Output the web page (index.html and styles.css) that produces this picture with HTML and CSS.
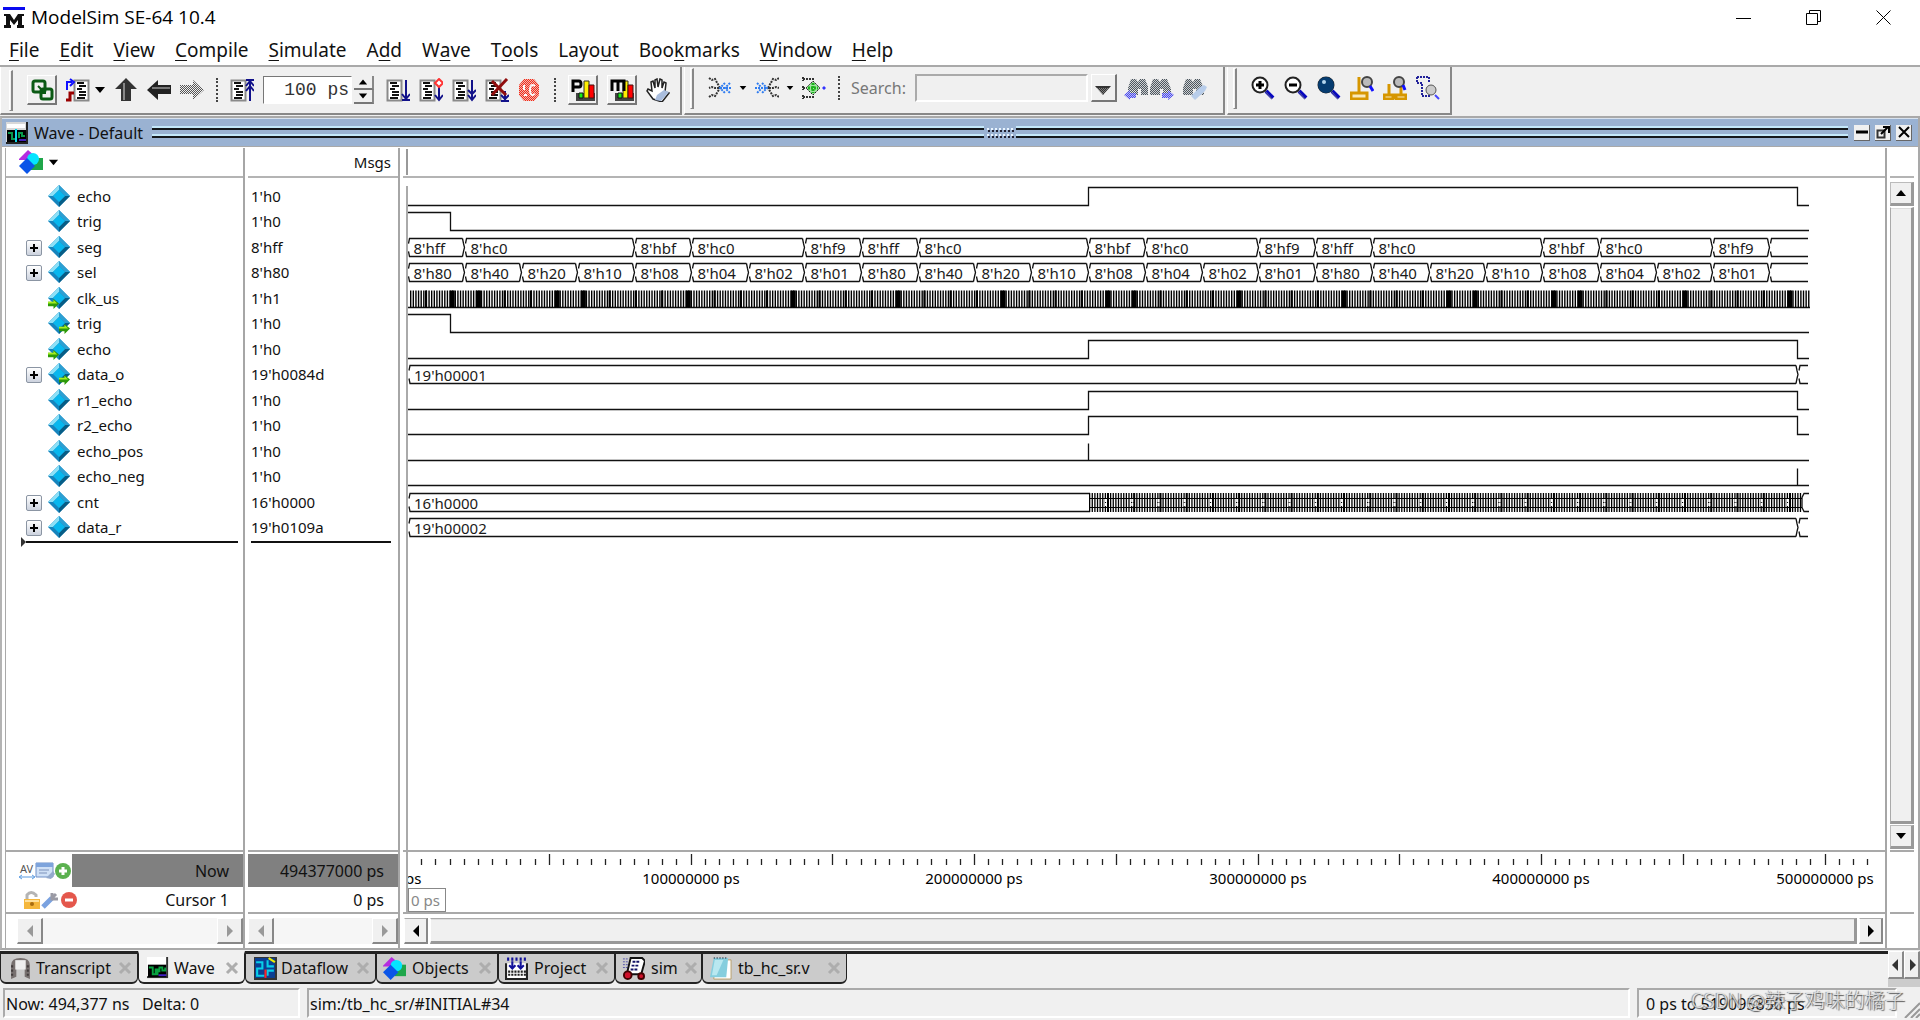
FILE: index.html
```html
<!DOCTYPE html>
<html lang="en">
<head>
<meta charset="utf-8">
<title>ModelSim SE-64 10.4</title>
<link rel="stylesheet" href="styles.css">
</head>
<body>
<svg class="sprite" aria-hidden="true">
  <defs>
    <pattern id="dots" width="2" height="2" patternUnits="userSpaceOnUse"><path d="M0 0h1v1H0zM1 1h1v1H1z" fill="#f0f0f0"/></pattern>
  </defs>
  <symbol id="doc" viewBox="0 0 24 24"><path d="M1.500 2.500h14v20h-14z" fill="#fff" stroke="#8a8a8a" stroke-width="2"/><path d="M4 5h7M6 8h7M4 11h5M6 14h7M6 17h7M4 20h8" stroke="#111" stroke-width="2"/></symbol>
  <symbol id="diamond" viewBox="0 0 22 22"><path d="M11 0 22 11 11 22 0 11z" fill="#1684bd"/><path d="M11 0 0 11h5l6-6z" fill="#8be0f7"/><path d="M11 0 22 11h-5l-6-6z" fill="#2d9fd2"/><path d="M11 22 22 11h-5l-6 6z" fill="#075d86"/><path d="m11 5 6 6-6 6-6-6z" fill="#08b7ee"/></symbol>
  <symbol id="port" viewBox="0 0 12 12"><path d="M0 4h6V1l6 5-6 6V9H0z" fill="#2c9a08"/><path d="M0 4h6V2l4 4H0z" fill="#a5ee20"/></symbol>
  <symbol id="shapes" viewBox="0 0 24 24"><path d="M0 9 9 0l8 7v3H0z" fill="#b52ce0"/><path d="M12 8h12v12H12z" fill="#1fa64a"/><circle cx="14" cy="9" r="6" fill="#05e4ff"/><path d="m8 8 8 8-8 8-8-8z" fill="#0b55e8"/></symbol>
  <symbol id="waveicon" viewBox="0 0 22 22"><path d="M0 0h22v22H0z" fill="#222"/><path d="M0 0h20v20H0z" fill="#d8d8d8"/><path d="M1 2h18v4H1z" fill="#fff"/><path d="M1 8h19v12H1z" fill="#000"/><path d="M2 11h4v6h4v-6M13 16v-5h3v3h3" fill="none" stroke="#089a4c" stroke-width="2"/><path d="M10 7v13" stroke="#0fd7e8" stroke-width="2"/><path d="M13 18h7" stroke="#4420b8" stroke-width="2"/></symbol>
  <symbol id="wave2" viewBox="0 0 24 24"><path d="M0 0h22v22H0z" fill="#333"/><path d="M0 0h20v20H0z" fill="#fff"/><path d="M1 8h19v13H1z" fill="#000"/><path d="M2 11h4v7h3v-5h2v6M13 16v-5h3v3h3v-3" fill="none" stroke="#07a340" stroke-width="2"/><path d="M12 19h8" stroke="#4020c0" stroke-width="2"/></symbol>
  <symbol id="bars" viewBox="0 0 24 24"><path d="M5 15h19v8H5z" fill="#444"/><path d="M8 15h4v5H8z" fill="#18f018" stroke="#111"/><path d="M13 3h5v17h-5z" fill="#ffee00" stroke="#332"/><path d="M18 7h5v13h-5z" fill="#f00" stroke="#411"/></symbol>
  <symbol id="lens" viewBox="0 0 24 24"><path d="m15 15 7 7" stroke="#0808c0" stroke-width="4"/><path d="m14 15 7 8" stroke="#668" stroke-width="1"/><circle cx="9" cy="9" r="7.500" fill="#fff" stroke="#222" stroke-width="2"/></symbol>
  <symbol id="binoc" viewBox="0 0 24 24"><path d="M5 3h5l2 3 2-3h5l4 10v6h-8v-6h-3v6H2v-7z" fill="#4c565e"/><path d="M0 0h24v24H0z" fill="url(#dots)" opacity=".8"/></symbol>
  <symbol id="cross" viewBox="0 0 14 14"><path d="m2 2 10 10M12 2 2 12" stroke="#adadad" stroke-width="3"/></symbol>
  <symbol id="tl" viewBox="0 0 12 12"><path d="M9 0v12L3 6z"/></symbol>
  <symbol id="tr" viewBox="0 0 12 12"><path d="M3 0v12l6-6z"/></symbol>
  <symbol id="tu" viewBox="0 0 12 12"><path d="M1 9h10L6 3z"/></symbol>
  <symbol id="td" viewBox="0 0 12 12"><path d="M1 3h10L6 9z"/></symbol>
</svg>

<header class="titlebar">
  <svg class="logo" viewBox="0 0 22 22"><path d="M0 0h22v3H0z" fill="#0a0af0"/><path d="M1 21v-3h2V9H1V7h6l4 6 4-6h6v2h-2v9h2v3h-7v-3h1v-5l-4 5-4-5v5h1v3z" fill="#111"/></svg>
  <h1>ModelSim SE-64 10.4</h1>
  <div class="wincontrols">
    <button aria-label="Minimize"><svg viewBox="0 0 16 16"><path d="M0 8.500h15"/></svg></button>
    <button aria-label="Restore"><svg viewBox="0 0 16 16"><path d="M.5 3.500h11v11H.5zM3.500 3.500v-3h11v11h-3"/></svg></button>
    <button aria-label="Close"><svg viewBox="0 0 16 16"><path d="m.5.5 14 14m0-14-14 14"/></svg></button>
  </div>
</header>

<nav class="menubar">
  <button><u>F</u>ile</button><button><u>E</u>dit</button><button><u>V</u>iew</button><button><u>C</u>ompile</button><button><u>S</u>imulate</button><button>A<u>d</u>d</button><button>W<u>a</u>ve</button><button>T<u>o</u>ols</button><button>Layo<u>u</u>t</button><button>Boo<u>k</u>marks</button><button><u>W</u>indow</button><button><u>H</u>elp</button>
</nav>

<div class="toolbars">
  <div class="group">
    <i class="handle"></i>
    <button class="raised" aria-label="Link"><svg viewBox="0 0 24 24"><g fill="none" stroke="#0b5a14" stroke-width="3"><rect x="3" y="3" width="12" height="11" rx="2"/><rect x="11" y="11" width="11" height="10" rx="2"/></g><path d="m8 8 7 7m0-5v5h-5" fill="none" stroke="#0b5a14" stroke-width="2"/></svg></button>
    <button aria-label="Step"><svg viewBox="0 0 24 24"><use href="#doc" x="7" y="0" width="24" height="24"/><path d="M1 12V4h5M4 1l4 3-4 4" fill="none" stroke="#1010ff" stroke-width="2"/><path d="M0 22h4v-7h4" fill="none" stroke="#900" stroke-width="3"/></svg></button>
    <button class="caret" aria-label="Step options"><svg viewBox="0 0 12 12"><use href="#td"/></svg></button>
    <button aria-label="Up"><svg viewBox="0 0 24 24"><path d="m12 0 11 11h-6v12H7V11H1z" fill="#333"/><path d="M10 5v17" stroke="#888" stroke-width="2"/></svg></button>
    <button aria-label="Back"><svg viewBox="0 0 24 24"><path d="M0 12 11 2v5h13v9H11v6z" fill="#222"/><path d="M5 10h18" stroke="#777" stroke-width="2"/></svg></button>
    <button aria-label="Forward"><svg viewBox="0 0 24 24"><path d="M24 12 13 2v5H0v9h13v6z" fill="#555"/><path d="M0 0h24v24H0z" fill="url(#dots)"/></svg></button>
    <i class="sep"></i>
    <button aria-label="Restart"><svg viewBox="0 0 24 24"><use href="#doc"/><path d="M16 2h8M20 3v20M16 8l4-5 4 5M16 13l4-5 4 5" fill="none" stroke="#11118a" stroke-width="2"/></svg></button>
    <div class="spinbox"><input type="text" value="100 ps" aria-label="Run length"><div class="spin"><button aria-label="Increase"><svg viewBox="0 0 12 12"><use href="#tu"/></svg></button><button aria-label="Decrease"><svg viewBox="0 0 12 12"><use href="#td"/></svg></button></div></div>
    <button aria-label="Run"><svg viewBox="0 0 24 24"><use href="#doc"/><path d="M20 2v19M16 16l4 5 4-5M16 22h8" fill="none" stroke="#11118a" stroke-width="2"/></svg></button>
    <button aria-label="Continue run"><svg viewBox="0 0 24 24"><use href="#doc"/><path d="M20 9v13M16 17l4 5 4-5" fill="none" stroke="#11118a" stroke-width="2"/><path d="m20 1 4 4-4 4-4-4z" fill="#fff" stroke="#f33" stroke-width="2"/></svg></button>
    <button aria-label="Run all"><svg viewBox="0 0 24 24"><use href="#doc"/><path d="M20 2v20M16 12l4 4 4-4M16 17l4 5 4-5" fill="none" stroke="#11118a" stroke-width="2"/></svg></button>
    <button aria-label="Break"><svg viewBox="0 0 24 24"><use href="#doc"/><path d="M20 13v9M16 17l4 4 4-4M16 23h8" fill="none" stroke="#11118a" stroke-width="2"/><path d="m7 3 14 14M22 1 7 17" stroke="#900d0d" stroke-width="3"/></svg></button>
    <button aria-label="Stop"><svg viewBox="0 0 24 24"><path d="M6 1h10l5 6v10l-5 6H6l-5-6V7z" fill="#f32b18"/><path d="M17 8q-5-3-5 4t5 4M6 7v5M6 17h3" stroke="#fff" stroke-width="2" fill="none"/><path d="M0 0h24v24H0z" fill="url(#dots)" opacity=".7"/></svg></button>
    <i class="sep"></i>
    <button class="raised" aria-label="Performance profile"><svg viewBox="0 0 24 24"><use href="#bars"/><path d="M2 14V3h6q2 0 2 3t-2 3H3" fill="none" stroke="#000" stroke-width="3"/></svg></button>
    <button class="raised" aria-label="Memory profile"><svg viewBox="0 0 24 24"><use href="#bars"/><path d="M2 13V3h12v10M8 3v10" fill="none" stroke="#000" stroke-width="3"/></svg></button>
    <button aria-label="Pan"><svg viewBox="0 0 24 24"><path d="M7 21 1 13l1-2 4 2-1-9 2-1 2 7V2l2-1 1 8 2-8 2 1v8l2-6 2 1-1 9 4 1-7 9z" fill="#fff" stroke="#222" stroke-width="1.500"/><path d="m11 17 7-5 5 2-8 9-6-1z" fill="#a9bddd"/></svg></button>
  </div>
  <div class="group drivers">
    <i class="handle"></i>
    <button aria-label="Drivers"><svg viewBox="0 0 24 24"><path d="M1 2l3 2 3-1 5 9-5 0-3-1-3 1M1 21l3-2 3 1 5-8" fill="none" stroke="#333" stroke-width="2" stroke-dasharray="2 1"/><path d="m17 7-5 5 5 5M22 7l-5 5 5 5M12 12h12" fill="none" stroke="#2f7cf0" stroke-width="2" stroke-dasharray="2 1"/></svg></button>
    <button class="caret small" aria-label="Drivers options"><svg viewBox="0 0 12 12"><use href="#td"/></svg></button>
    <button aria-label="Readers"><svg viewBox="0 0 24 24"><path d="M24 2l-3 2-3-1-5 9 5 0 3-1 3 1M24 21l-3-2-3 1-5-8" fill="none" stroke="#333" stroke-width="2" stroke-dasharray="2 1"/><path d="m7 7 5 5-5 5M2 7l5 5-5 5M0 12h12" fill="none" stroke="#2f7cf0" stroke-width="2" stroke-dasharray="2 1"/></svg></button>
    <button class="caret small" aria-label="Readers options"><svg viewBox="0 0 12 12"><use href="#td"/></svg></button>
    <button aria-label="Net"><svg viewBox="0 0 24 24"><path d="M1 1v4M1 3h11M1 10v4M1 12h6M1 19v4M1 21h11" stroke="#333" stroke-width="2" stroke-dasharray="2 1"/><path d="m11 5 7 7-7 7-7-7z" fill="#9fe39f" stroke="#222" stroke-dasharray="2 1"/><path d="M11 7v10M6 12h10" stroke="#1db31d" stroke-width="3" stroke-dasharray="2 1"/><path d="m22 10 2 2-2 2-2-2z" fill="#33f"/></svg></button>
    <i class="sep"></i>
    <label for="search">Search:</label>
    <div class="combo"><input id="search" type="text"><button class="raised" aria-label="Search history"><svg viewBox="0 0 24 24"><path d="M4 10h16l-8 9z" fill="#333"/><path d="M4 12h15v6H4z" fill="url(#dots)" opacity=".4"/></svg></button></div>
    <button class="tight" aria-label="Find previous"><svg viewBox="0 0 24 24"><use href="#binoc" x="2"/><path d="m0 19 6-5v3h6v5H6v2z" fill="#4a4af0"/><path d="M0 14h12v10H0z" fill="url(#dots)" opacity=".7"/></svg></button>
    <button class="tight" aria-label="Find next"><svg viewBox="0 0 24 24"><use href="#binoc" x="-2"/><path d="m24 19-6-5v3h-6v5h6v2z" fill="#4a4af0"/><path d="M12 14h12v10H12z" fill="url(#dots)" opacity=".7"/></svg></button>
    <button aria-label="Search options"><svg viewBox="0 0 24 24"><use href="#binoc" x="-2"/><path d="m8 20 9-9 4-2 3 2-2 4-10 9z" fill="#b8cdea"/></svg></button>
  </div>
  <div class="group">
    <i class="handle"></i>
    <button aria-label="Zoom in"><svg viewBox="0 0 24 24"><use href="#lens"/><path d="M5 9h8M9 5v8" stroke="#000" stroke-width="3"/></svg></button>
    <button aria-label="Zoom out"><svg viewBox="0 0 24 24"><use href="#lens"/><path d="M5 9h8" stroke="#000" stroke-width="3"/></svg></button>
    <button aria-label="Zoom full"><svg viewBox="0 0 24 24"><use href="#lens"/><circle cx="9" cy="9" r="8" fill="#063c70"/><circle cx="7" cy="6" r="2" fill="#b5d5ec"/></svg></button>
    <button aria-label="Zoom to cursor"><svg viewBox="0 0 24 24"><path d="M9 1v15M1 17h16v6H1z" fill="#f8e9bb" stroke="#d69600" stroke-width="3"/><circle cx="17" cy="6" r="5" fill="#bbb" stroke="#444" stroke-width="2"/><path d="m20 10 3 5" stroke="#11f" stroke-width="3"/></svg></button>
    <button aria-label="Zoom between cursors"><svg viewBox="0 0 24 24"><path d="M6 8v10M1 19h9v4H1zM18 4v14M13 19h10v4H13z" fill="#f8e9bb" stroke="#d69600" stroke-width="3"/><circle cx="16" cy="6" r="5" fill="#bbb" stroke="#444" stroke-width="2"/><path d="m20 9 2 5" stroke="#11f" stroke-width="3"/></svg></button>
    <button aria-label="Zoom area"><svg viewBox="0 0 24 24"><path d="M1 1h12v5M1 1v6h5v13h8" fill="none" stroke="#22229a" stroke-width="2" stroke-dasharray="2 1"/><circle cx="15" cy="14" r="5" fill="#ccc" stroke="#555"/><path d="m19 19 4 4" stroke="#44f" stroke-width="2"/></svg></button>
  </div>
</div>

<main class="pane">
  <div class="panetitle">
    <svg class="ico"><use href="#waveicon"/></svg>
    <h2>Wave - Default</h2>
    <i class="rails"></i>
    <svg class="grip" viewBox="0 0 28 12" aria-hidden="true"><path d="M1 2h26M1 8h26" stroke="#e8f4ff" stroke-width="2" stroke-dasharray="2 2"/><path d="M2 4h26M2 10h26" stroke="#223" stroke-width="2" stroke-dasharray="2 2"/></svg>
    <i class="rails"></i>
    <button aria-label="Minimize pane"><svg viewBox="0 0 14 14"><path d="M1 7h12" stroke="#000" stroke-width="3"/></svg></button>
    <button aria-label="Undock pane"><svg viewBox="0 0 14 14"><path d="M1.500 5.500h7v7h-7z" fill="none" stroke="#333" stroke-width="2"/><path d="M5 9l7-7M7 2h6v6" stroke="#000" stroke-width="2" fill="none"/></svg></button>
    <button aria-label="Close pane"><svg viewBox="0 0 14 14"><path d="m2 2 10 10M12 2 2 12" stroke="#000" stroke-width="2"/></svg></button>
  </div>
  <div class="columns">
    <section class="col names">
      <div class="head"><svg class="shapes"><use href="#shapes"/></svg><svg class="tri"><use href="#td"/></svg></div>
      <div class="body"><ul class="rows" id="names"></ul></div>
      <div class="foot">
        <div class="now">
          <svg class="footicons" viewBox="0 0 54 18"><text x="1" y="11" font-size="11" fill="#555">AV</text><path d="M1 15h14M3 13l-3 2 3 2M13 13l3 2-3 2" stroke="#5b9be0" fill="none"/><path d="M17 1h17v14H17z" fill="#cfe0f6" stroke="#6f90c8"/><path d="M17 1h17v4H17z" fill="#7ea4dc"/><path d="M20 8h10M20 11h8" stroke="#7d92bb"/><path d="m27 16 7-7 2 3-4 5z" fill="#93a9cc"/><circle cx="44" cy="9" r="8" fill="#5bb14f"/><path d="M44 5v8M40 9h8" stroke="#fff" stroke-width="3"/></svg>
          <span>Now</span></div>
        <div class="cursor">
          <svg class="footicons" viewBox="0 0 54 18"><path d="M4 8V4q4-5 9 0v2" fill="none" stroke="#b4b4b4" stroke-width="3"/><path d="M1 8h16v10H1z" fill="#f5b73c"/><path d="M2 9h14v2H2z" fill="#ffe09a"/><circle cx="9" cy="13" r="2" fill="#a86c10"/><path d="m20 16 9-9" stroke="#7aa2e0" stroke-width="5"/><path d="m28 8 5-5M29 2v6h6" stroke="#9a9aa4" stroke-width="3" fill="none"/><circle cx="46" cy="9" r="8" fill="#e4574c"/><path d="M42 9h8" stroke="#fff" stroke-width="3"/></svg>
          <span>Cursor 1</span></div>
      </div>
      <div class="scroll disabled"><button aria-label="Scroll left"><svg><use href="#tl"/></svg></button><i class="trough"></i><button aria-label="Scroll right"><svg><use href="#tr"/></svg></button></div>
    </section>
    <section class="col values">
      <div class="head"><span>Msgs</span></div>
      <div class="body"><ul class="rows" id="values"></ul></div>
      <div class="foot"><div class="now"><span>494377000 ps</span></div><div class="cursor"><span>0 ps</span></div></div>
      <div class="scroll disabled"><button aria-label="Scroll left"><svg><use href="#tl"/></svg></button><i class="trough"></i><button aria-label="Scroll right"><svg><use href="#tr"/></svg></button></div>
    </section>
    <section class="col waves">
      <div class="head"><i class="edge"></i></div>
      <div class="body"><svg id="plot"></svg></div>
      <div class="foot"><svg id="ruler"></svg><output class="cursorbox">0 ps</output></div>
      <div class="scroll"><button aria-label="Scroll left"><svg><use href="#tl"/></svg></button><i class="thumb"></i><button aria-label="Scroll right"><svg><use href="#tr"/></svg></button></div>
    </section>
    <section class="col vscroll">
      <div class="head"></div>
      <div class="body"><button aria-label="Scroll up"><svg><use href="#tu"/></svg></button><i class="thumb"></i><button aria-label="Scroll down"><svg><use href="#td"/></svg></button></div>
      <div class="foot"></div>
      <div class="scroll"></div>
    </section>
  </div>
</main>

<nav class="tabs">
  <button class="t1"><svg class="ico" viewBox="0 0 22 22"><path d="M2 21V8q0-7 9-7t9 7v13l-5-2V9H7v10z" fill="#77706f"/><path d="M6 3h10v9H6z" fill="#eee"/><path d="M3 8v12M18 8v12" stroke="#423c3c" stroke-width="2" stroke-dasharray="2 2"/></svg><span>Transcript</span><svg class="x"><use href="#cross"/></svg></button>
  <button class="t2 active"><svg class="ico"><use href="#wave2"/></svg><span>Wave</span><svg class="x"><use href="#cross"/></svg></button>
  <button class="t3"><svg class="ico" viewBox="0 0 22 22"><path d="M0 0h22v22H0z" fill="#333"/><path d="M1 1h19v19H1z" fill="#0a3f94"/><path d="M2 5h6v6H3v7h7M13 3v6h6M13 18v-5h6" fill="none" stroke="#08cfe8" stroke-width="2"/><path d="M11 12v8" stroke="#f22" stroke-width="2"/><path d="m14 1 6 4" stroke="#ee0" stroke-width="2"/></svg><span>Dataflow</span><svg class="x"><use href="#cross"/></svg></button>
  <button class="t4"><svg class="ico"><use href="#shapes"/></svg><span>Objects</span><svg class="x"><use href="#cross"/></svg></button>
  <button class="t5"><svg class="ico" viewBox="0 0 22 22"><path d="M1 6v15h20V6" fill="#fff" stroke="#222" stroke-width="2"/><path d="M3 14h17M3 17h17" stroke="#222" stroke-dasharray="2 1" stroke-width="2"/><path d="M2 2h18" stroke="#11119a" stroke-width="3" stroke-dasharray="2 2"/><path d="M7 4v7M4 8l3 3 3-3M15 4v7M12 8l3 3 3-3" fill="none" stroke="#11119a" stroke-width="2"/></svg><span>Project</span><svg class="x"><use href="#cross"/></svg></button>
  <button class="t6"><svg class="ico" viewBox="0 0 24 24"><path d="M1 2h6M1 5h6M1 8h5M1 11h5" stroke="#55a" stroke-dasharray="2 1"/><path d="M9 1h12l3 3-4 14H5z" fill="#fff" stroke="#111" stroke-width="2"/><path d="M11 5h8M10 9h8M9 13h8" stroke="#116" stroke-width="2" stroke-dasharray="3 1"/><circle cx="6" cy="19" r="4" fill="#d0102a" stroke="#400" stroke-width="2"/><circle cx="20" cy="20" r="3" fill="#d0102a" stroke="#400" stroke-width="2"/></svg><span>sim</span><svg class="x"><use href="#cross"/></svg></button>
  <button class="t7"><svg class="ico" viewBox="0 0 24 24"><path d="M7 3h16v20H5z" fill="#fff" stroke="#b79d68"/><path d="M5 1h15l-2 20H1z" fill="#86cede"/><path d="M6 3h9L8 19H3z" fill="#b9e8f0"/><path d="M5 1h15" stroke="#456" stroke-width="2" stroke-dasharray="1 2"/></svg><span>tb_hc_sr.v</span><svg class="x"><use href="#cross"/></svg></button>
  <i class="fill"></i>
  <div class="tabnav"><button aria-label="Previous tabs"><svg viewBox="0 0 12 12"><path d="M8 0v12L2 6z" fill="#333"/></svg></button><button aria-label="Next tabs"><svg viewBox="0 0 12 12"><path d="M4 0v12l6-6z" fill="#333"/></svg></button></div>
</nav>

<footer class="status">
  <span class="cell now-cell">Now: 494,377 ns&nbsp;&nbsp; Delta: 0</span>
  <span class="cell path-cell">sim:/tb_hc_sr/#INITIAL#34</span>
  <span class="cell range-cell">0 ps to 519095850 ps</span>
  <svg class="sizer" viewBox="0 0 16 16"><path d="M1 16 16 1M7 16l9-9M12 16l4-4" stroke="#999" stroke-width="2"/></svg>
  <span class="watermark">CSDN @辣子鸡味的橘子</span>
</footer>
<script src="wave.js"></script>
</body>
</html>
```
FILE: styles.css
```css
* { box-sizing: border-box; }
body {
  margin: 0; min-height: 100vh; display: flex; flex-direction: column;
  background: #f0f0f0; color: #111; font-family: "Noto Sans", "Noto Sans CJK SC", sans-serif; font-size: 15px; line-height: 20px;
}
button { font: inherit; color: inherit; border: 0; padding: 0; background: none; display: flex; align-items: center; justify-content: center; }
input { font: inherit; border-radius: 0; }
svg { display: block; flex: none; }
ul { list-style: none; margin: 0; padding: 0; }
.sprite { position: absolute; width: 0; height: 0; }

.titlebar { height: 36px; background: #fff; display: flex; align-items: center; padding: 0 1px 0 3px; }
.logo { width: 22px; height: 22px; }
h1 { margin: 0 0 2px 6px; font: 19px/26px "Open Sans", "Noto Sans", sans-serif; color: #000; flex: 1; }
.wincontrols { display: flex; }
.wincontrols button { width: 70px; height: 32px; }
.wincontrols svg { width: 16px; height: 16px; fill: none; stroke: #000; }

.menubar { height: 29px; background: #fff; display: flex; align-items: center; gap: 20px; padding: 0 0 1px 9px; font-size: 19px; }
.menubar button { height: 26px; }
.menubar u { text-underline-offset: 3px; text-decoration-thickness: 1px; }

.toolbars { display: flex; height: 51px; border-top: 2px solid #a9a9a9; gap: 2px; padding-right: 4px; }
.group { display: flex; align-items: center; gap: 9px; height: 48px; padding: 0 10px 4px 5px; border: solid #888; border-width: 0 2px 2px 0; border-left: 1px solid #fff; }
.group:first-child { padding: 0 10px 0 8px; }
.group.drivers { padding-right: 16px; }
.handle { width: 4px; height: 41px; margin-right: 5px; border: 1px solid #fff; border-right: 2px solid #888; border-bottom-color: #888; }
.group button { width: 24px; height: 28px; }
.group svg { width: 24px; height: 24px; }
.group .raised, .raised { width: 30px; height: 30px; background: #f0f0f0; border: 1px solid #fff; border-right: 2px solid #777; border-bottom: 2px solid #777; }
.group .caret { width: 10px; margin-left: -4px; }
.group .caret svg { width: 12px; height: 12px; }
.group .caret.small { margin-left: -1px; width: 6px; }
.group .caret.small svg { width: 8px; height: 8px; }
.sep { height: 24px; border-left: 2px dotted #444; margin: 0 3px; }
.group label { font-size: 16px; color: #777; margin-left: -1px; }
.spinbox { display: flex; gap: 2px; margin-right: 3px; }
.spinbox input { width: 89px; height: 28px; border: 1px solid #fff; border-left-color: #777; border-top-color: #777; background: #fff; font: 18px "Liberation Mono", monospace; color: #333; text-align: right; padding: 0 2px; }
.spin { width: 20px; display: flex; flex-direction: column; }
.group .spin button { width: 20px; height: 14px; border-bottom: 2px solid #777; border-right: 2px solid #888; }
.group .spin svg { width: 12px; height: 10px; }
.combo { display: flex; gap: 3px; margin-right: -2px; }
.combo input { width: 173px; height: 28px; background: #f0f0f0; border: 2px solid #fff; border-top-color: #aaa; border-left-color: #aaa; }
.group .combo .raised { width: 26px; height: 28px; }
.group .tight { margin-right: -7px; }
.group .tight + button:last-child { margin-left: 7px; }

.pane { flex: 1; display: flex; flex-direction: column; border: 2px solid #a9a9a9; border-left-color: #b4b4b4; background: #fff; min-height: 0; }
.panetitle { display: flex; align-items: center; height: 28px; background: #9ab2d2; padding: 0 6px 0 4px; border-top: 1px solid #d8e2ee; }
.panetitle .ico { width: 22px; height: 22px; }
h2 { margin: 0 9px 0 6px; font-size: 16px; font-weight: 400; line-height: 20px; }
.rails { flex: 1 1 0; height: 13px; background: linear-gradient(#c4e8fa 0 2px, #15191d 2px 4px, #9ab2d2 4px 8px, #c4e8fa 8px 10px, #15191d 10px 12px, transparent 12px); }
.grip { width: 28px; height: 12px; margin: 0 2px; }
.panetitle button { width: 16px; height: 16px; background: #f0f0f0; margin-left: 5px; border-right: 1px solid #666; border-bottom: 1px solid #666; }
.panetitle .rails + button { margin-left: 6px; }
.panetitle button svg { width: 14px; height: 14px; }

.columns { flex: 1; display: flex; gap: 3px; padding: 1px 4px 0 3px; border-top: 1px solid #a9a9a9; min-height: 0; }
.col { display: flex; flex-direction: column; border-right: 2px solid #a6a6a6; }
.head { height: 30px; border-bottom: 2px solid #b4b4b4; display: flex; align-items: center; }
.body { flex: 1; min-height: 0; overflow: hidden; }
.foot { height: 64px; border: solid #a9a9a9; border-width: 2px 0; overflow: hidden; }
.scroll { height: 34px; display: flex; align-items: center; }
.names { width: 240px; border-left: 1px solid #a9a9a9; }
.names .head { padding-left: 13px; }
.shapes { width: 24px; height: 24px; }
.tri { width: 11px; height: 11px; margin-left: 5px; }
.rows { display: grid; grid-template-rows: repeat(14, 1fr); height: 360px; padding-bottom: 1px; border-bottom: 2px solid #111; }
.rows li { display: flex; align-items: center; min-height: 0; }
#names { position: relative; margin: 5px 5px 0 20px; }
#names::after { content: ""; position: absolute; left: -5px; bottom: -6px; border: 5px solid transparent; border-left: 5px solid #333; border-right: 0; }
#names .glyph { width: 22px; height: 22px; margin: 0 7px 0 6px; }
#names .expander { width: 16px; height: 16px; border: 1px solid #8b95a3; border-radius: 2px; background: linear-gradient(#fff, #ccd2de); margin-top: 2px; }
#names .expander svg { width: 10px; height: 10px; }
#names .blank { width: 16px; }
.values { width: 152px; }
.values .head { justify-content: flex-end; padding-right: 7px; }
#values { margin: 5px 7px 0 3px; }
.now { height: 33px; margin-top: 2px; background: #808080; display: flex; align-items: center; justify-content: flex-end; padding-right: 14px; }
.cursor { height: 25px; display: flex; align-items: center; justify-content: flex-end; padding-right: 14px; }
.now, .cursor { font-size: 16px; }
.names .now, .names .cursor { justify-content: space-between; }
.names .now { background: linear-gradient(90deg, #fff 66px, #808080 66px); padding-left: 13px; }
.names .cursor { padding-left: 17px; }
.footicons { width: 54px; height: 18px; }
.scroll button { width: 26px; height: 26px; background: #f0f0f0; border: 1px solid #fff; border-right: 2px solid #888; border-bottom: 2px solid #888; }
.scroll button svg, .vscroll button svg { width: 12px; height: 12px; }
.disabled button svg { fill: #999; }
.names .scroll { padding-left: 11px; }
.trough { flex: 1; height: 26px; background: #f6f6f6; }
.waves { flex: 1; min-width: 0; }
.waves .body, .waves .head { padding-left: 3px; }
.edge { border-left: 2px solid #999; height: 26px; }
.waves .body { padding-top: 8px; }
#plot { width: 100%; height: 100%; border-left: 2px solid #aaa; }
.waves .foot { position: relative; padding-left: 3px; }
#ruler { width: 100%; height: 60px; border-left: 2px solid #aaa; }
.cursorbox { position: absolute; left: 5px; bottom: 0; width: 38px; height: 24px; border: 1px solid #888; color: #888; background: #fff; padding-left: 2px; line-height: 22px; }
svg text { font-family: "Noto Sans", sans-serif; }
.waves .scroll { padding: 0 2px 0 1px; gap: 2px; }
.waves .scroll button { width: 24px; height: 26px; }
.thumb { flex: 1; background: #f0f0f0; border: 1px solid #fff; box-shadow: inset 0 1px #ddd; border-right: 3px solid #999; border-bottom: 3px solid #999; }
.waves .thumb { height: 26px; }
.waves .scroll button, .waves .thumb { border-top: 1px solid #aaa; }
.vscroll { width: 24px; border-right: 0; }
.vscroll .body { display: flex; flex-direction: column; padding: 4px 0 1px; gap: 1px; }
.vscroll .body button { height: 24px; background: #f0f0f0; border: 1px solid #bbb; border-right: 3px solid #999; border-bottom: 3px solid #999; }
.vscroll .thumb { border-left: 1px solid #aaa; }

.tabs { display: flex; height: 36px; margin-top: 1px; font-size: 16px; align-items: flex-start; }
.tabs > button { height: 33px; background: #cbcbcb; border: 1px solid #222; border-top-width: 3px; border-bottom-width: 2px; border-radius: 0 0 6px 6px; justify-content: flex-start; padding: 0 5px 0 8px; gap: 4px; }
.tabs > button.active { background: #f0f0f0; border-top-color: #f0f0f0; }
.tabs span { flex: 1; text-align: left; white-space: nowrap; }
.tabs .ico { width: 23px; height: 23px; }
.tabs .x { width: 14px; height: 14px; }
.t1 { width: 138px; } .t2 { width: 107px; } .t3 { width: 131px; } .t4 { width: 122px; } .t5 { width: 117px; } .t6 { width: 87px; } .t7 { width: 145px; }
.tabs .t4, .tabs .t5, .tabs .t6, .tabs .t7 { padding-left: 6px; gap: 6px; }
.fill { flex: 1; border-top: 3px solid #222; }
.tabnav { display: flex; background: #ccc; height: 36px; }
.tabnav button { width: 16px; height: 28px; background: #f0f0f0; border: 1px solid #fff; border-right: 2px solid #888; border-bottom: 2px solid #888; }
.tabnav svg { width: 12px; height: 12px; }

.status { display: flex; height: 33px; padding: 1px 0 2px 3px; gap: 7px; position: relative; font-size: 16px; }
.cell { border: 2px solid #fff; border-top-color: #aaa; border-left-color: #aaa; padding: 2px 1px; line-height: 24px; white-space: nowrap; }
.now-cell { width: 297px; }
.path-cell { flex: 1; }
.range-cell { width: 260px; padding-left: 7px; }
.sizer { width: 16px; height: 16px; align-self: flex-end; }
.watermark { position: absolute; right: 15px; top: 1px; font: 20px/24px "Noto Sans CJK SC", sans-serif; font-weight: 300; color: rgba(255, 255, 255, .7); text-shadow: 1px 1px 1px #555, -1px 0 1px #888; }
```
FILE: wave.js
```js
// Signal table: name, message value, port arrow, expandable
const signals = [
  ["echo", "1'h0"], ["trig", "1'h0"], ["seg", "8'hff", "", 1], ["sel", "8'h80", "", 1],
  ["clk_us", "1'h1", "in"], ["trig", "1'h0", "out"], ["echo", "1'h0", "in"], ["data_o", "19'h0084d", "out", 1],
  ["r1_echo", "1'h0"], ["r2_echo", "1'h0"], ["echo_pos", "1'h0"], ["echo_neg", "1'h0"],
  ["cnt", "16'h0000", "", 1], ["data_r", "19'h0109a", "", 1]
];
const port = { in: '<use href="#port" x="0" y="11" width="11" height="11"/>', out: '<use href="#port" x="11" y="11" width="11" height="11"/>' };
document.getElementById("names").innerHTML = signals.map(([name, , dir, open]) =>
  `<li>${open ? `<button class="expander" aria-label="Expand ${name}"><svg viewBox="0 0 10 10"><path d="M1 5h8M5 1v8" stroke="#000" stroke-width="2"/></svg></button>` : '<i class="blank"></i>'}<svg class="glyph" viewBox="0 0 22 22"><use href="#diamond"/>${port[dir] || ""}</svg><span>${name}</span></li>`).join("");
document.getElementById("values").innerHTML = signals.map(s => `<li>${s[1]}</li>`).join("");

// Plot geometry in pixels; 20 us per display step
const step = 56.75, end = 1401, rise = 680, fall = 1389;
const high = i => Math.floor(1 + 25.5 * i) + 0.5;
const low = i => high(i) + 18;
let lines = "", texts = "", extra = "";
const line = d => { lines += d; };
const label = (x, i, t) => { texts += `<text x="${x}" y="${high(i) + 15}">${t}</text>`; };

[0, 6, 8, 9].forEach(i => line(`M0 ${low(i)}H${rise}.5V${high(i)}H${fall}.5V${low(i)}H${end}`));
[1, 5].forEach(i => line(`M0 ${high(i)}H42.5V${low(i)}H${end}`));
line(`M0 ${low(10)}H${end}M${rise}.5 ${low(10)}V${high(10) + 1}`);
line(`M0 ${low(11)}H${end}M${fall}.5 ${low(11)}V${high(11) + 1}`);

function bus(i, edges, to) {
  const t = high(i), b = low(i);
  edges.forEach(([x, text], n) => {
    const next = n + 1 < edges.length ? edges[n + 1][0] : to;
    line(`M${x + 4} ${t}h-2l-1 5M${x + 1} ${b - 5}l1 5h2M${x + 3} ${t}H${next - 2}M${x + 3} ${b}H${next - 2}`);
    if (n) line(`M${x - 2} ${t}l1 5l1 4l-1 4l-1 5`);
    if (text) label(x + 6, i, text);
  });
}
const at = k => Math.round(k * step) - 0.5;
bus(2, [[0, "ff"], [1, "c0"], [4, "bf"], [5, "c0"], [7, "f9"], [8, "ff"], [9, "c0"], [12, "bf"], [13, "c0"], [15, "f9"], [16, "ff"], [17, "c0"], [20, "bf"], [21, "c0"], [23, "f9"], [24, ""]].map(([k, v]) => [at(k), v && "8'h" + v]), end + 1);
const digits = ["80", "40", "20", "10", "08", "04", "02", "01"];
bus(3, Array.from({ length: 25 }, (_, k) => [at(k), k < 24 ? "8'h" + digits[k % 8] : ""]), end + 1);
bus(7, [[0, "19'h00001"], [fall + 1, ""]], end + 1);
bus(13, [[0, "19'h00002"], [fall + 1, ""]], end + 1);
bus(12, [[0, "16'h0000"]], rise + 4);
line(`M${end} ${high(12)}h-5l-2 4v10l2 4h5`);

// Dense clock: thin bars with a heavier beat every tenth one
const beat = 26.23, first = 18, heavy = [1, 2, 5, 6, 10, 14, 18, 22, 26, 27, 31, 35, 39, 40, 43, 44, 48, 52];
const cy = high(4) + 1;
for (let x = 2; x < end; x += beat / 10) extra += `<rect x="${x.toFixed(2)}" y="${cy}" width="1.4" height="17"/>`;
for (let j = 0; first + j * beat < end; j++) {
  const w = heavy.includes(j) ? 5 : 2, x = first + j * beat - w / 2;
  extra += `<rect x="${x.toFixed(2)}" y="${cy}" width="${w}" height="17"/>`;
}
line(`M0 ${low(4)}H${end + 1}`);

// Dense counter bus
const ny = high(12) - 0.5;
for (let x = rise + 1; x < fall + 4; x += beat / 10) extra += `<rect x="${x.toFixed(2)}" y="${ny}" width="1.3" height="19"/>`;
extra += `<rect x="${rise + 1}" y="${ny + 5}" width="${fall - rise + 4}" height="1"/><rect x="${rise + 1}" y="${ny + 14}" width="${fall - rise + 4}" height="1"/>`;
for (let j = 26; first + j * beat < end - 8; j++) {
  const x = first + j * beat;
  extra += `<rect x="${(x - 1).toFixed(2)}" y="${ny}" width="2" height="19"/><rect class="gap" x="${(x - 3).toFixed(2)}" y="${ny + 6}" width="2" height="3"/><rect class="gap" x="${(x - 3).toFixed(2)}" y="${ny + 10}" width="2" height="3"/>`;
}
document.getElementById("plot").innerHTML =
  `<style>.gap{fill:#fff}</style><path d="${lines}" fill="none" stroke="#111" stroke-width="1.3"/><g fill="#000">${extra}</g><g fill="#1a1a1a" font-size="15">${texts}</g>`;

// Time ruler: 5,000,000 ps per tick
let ruler = "", marks = "";
for (let k = 1; k <= 103; k++) {
  const x = Math.round(k * 14.175) - 0.5;
  ruler += `M${x} ${k % 10 ? 7 : 2}V13`;
}
for (let n = 0; n <= 5; n++) marks += `<text x="${Math.round(n * 283.5) - 1}" y="32">${n ? n + "00000000" : "0"} ps</text>`;
document.getElementById("ruler").innerHTML = `<path d="${ruler}" stroke="#222" stroke-width="1.3"/><g font-size="15" text-anchor="middle">${marks}</g>`;
```
